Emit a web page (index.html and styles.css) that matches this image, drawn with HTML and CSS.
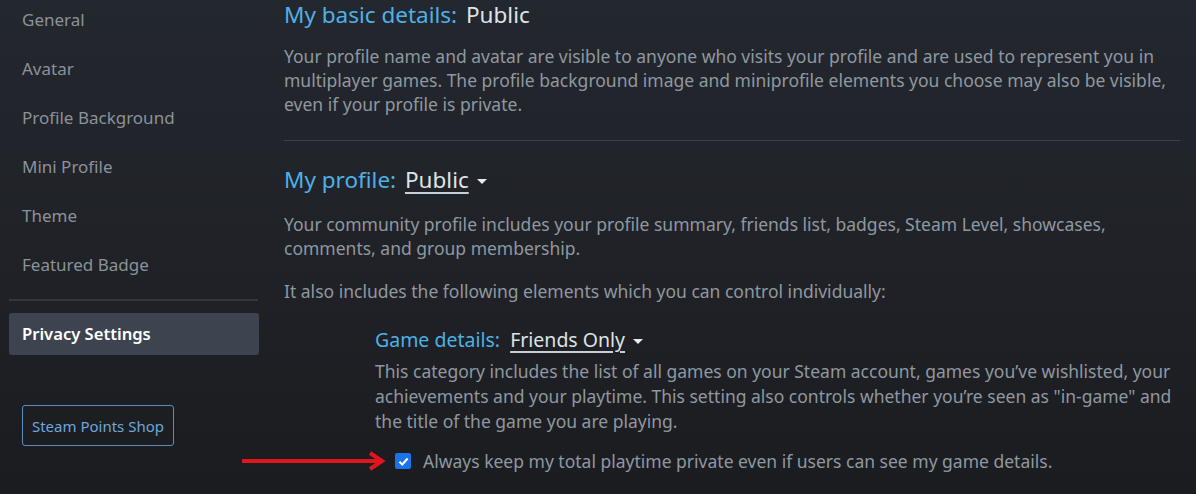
FILE: index.html
```html
<!DOCTYPE html>
<html>
<head>
<meta charset="utf-8">
<link rel="stylesheet" href="styles.css">
</head>
<body>
<div class="page">
  <nav class="sidebar">
    <a class="nav-item">General</a>
    <a class="nav-item">Avatar</a>
    <a class="nav-item">Profile Background</a>
    <a class="nav-item">Mini Profile</a>
    <a class="nav-item">Theme</a>
    <a class="nav-item">Featured Badge</a>
    <div class="nav-divider"></div>
    <a class="nav-item active">Privacy Settings</a>
    <button class="points-btn">Steam Points Shop</button>
  </nav>
  <main class="content">
    <section class="block">
      <h2 class="heading"><span class="label">My basic details:</span> <span class="value">Public</span></h2>
      <p class="desc first">Your profile name and avatar are visible to anyone who visits your profile and are used to represent you in multiplayer games. The profile background image and miniprofile elements you choose may also be visible, even if your profile is private.</p>
    </section>
    <div class="rule"></div>
    <section class="block">
      <h2 class="heading"><span class="label">My profile:</span> <span class="value dropdown">Public</span><span class="caret"></span></h2>
      <p class="desc intro">Your community profile includes your profile summary, friends list, badges, Steam Level, showcases, comments, and group membership.</p>
      <p class="desc second">It also includes the following elements which you can control individually:</p>
      <div class="sub">
        <h3 class="subheading"><span class="label">Game details:</span> <span class="value dropdown">Friends Only</span><span class="caret"></span></h3>
        <p class="desc subdesc">This category includes the list of all games on your Steam account, games you’ve wishlisted, your achievements and your playtime. This setting also controls whether you’re seen as "in-game" and the title of the game you are playing.</p>
      </div>
      <div class="check-row">
        <div class="arrow">
          <svg width="146" height="20" viewBox="0 0 146 20"><path d="M0 10H138" stroke="#e0161d" stroke-width="4"/><path d="M128 2L140 10L128 18" fill="none" stroke="#e0161d" stroke-width="4" stroke-linejoin="miter"/></svg>
        </div>
        <span class="checkbox"><svg width="15" height="15" viewBox="0 0 15 15"><path d="M3.5 7.8L6.3 10.5L11.6 4.6" fill="none" stroke="#fff" stroke-width="2.2"/></svg></span>
        <span class="check-label">Always keep my total playtime private even if users can see my game details.</span>
      </div>
    </section>
  </main>
</div>
</body>
</html>
```
FILE: styles.css
```css
* { box-sizing: border-box; }
html, body { margin: 0; padding: 0; }
body {
  width: 1196px;
  height: 494px;
  overflow: hidden;
  background: linear-gradient(180deg, #23272e 0%, #1f2126 60%, #1b1c20 100%);
  font-family: "Noto Sans", "Open Sans", sans-serif;
  color: #8f98a0;
}
.page { display: flex; height: 494px; }
.sidebar {
  width: 284px;
  flex: none;
  padding: 0 25px 0 9px;
  display: flex;
  flex-direction: column;
}
.nav-item {
  display: block;
  height: 49px;
  line-height: 40px;
  padding-left: 13px;
  font-size: 17px;
  color: #8b929a;
}
.nav-divider { height: 2px; background: #33373f; margin: 5px 0 12px; width: 249px; }
.nav-item.active {
  width: 250px;
  height: 42px;
  line-height: 42px;
  background: #3d4450;
  border-radius: 3px;
  color: #ffffff;
  font-weight: 600;
  font-size: 16.6px;
}
.points-btn {
  margin: 50px 0 0 13px;
  width: 152px;
  height: 41px;
  background: transparent;
  border: 1px solid #5b8ebf;
  border-radius: 3px;
  color: #6ea6dc;
  font-family: inherit;
  font-size: 15px;
  padding: 0;
  text-align: center;
}
.content { flex: 1; padding-right: 16px; }
.heading {
  margin: 0;
  font-weight: 400;
  font-size: 22.5px;
  line-height: 30px;
  height: 30px;
}
.label { color: #4fb0e6; }
.value { color: #dfe3e6; margin-left: 3px; }
.subheading .value { margin-left: 5px; }
.dropdown { text-decoration: underline; text-underline-offset: 4px; text-decoration-thickness: 1.5px; text-decoration-color: #c6d0d8; }
.caret {
  display: inline-block;
  width: 0; height: 0;
  border-left: 5px solid transparent;
  border-right: 5px solid transparent;
  border-top: 5px solid #e8ecef;
  margin-left: 8px;
  vertical-align: middle;
}
.desc {
  margin: 0;
  font-size: 17.5px;
  line-height: 24px;
  color: #8f98a0;
}
.desc.first { margin-top: 14px; }
.rule { height: 1px; background: #3b4149; margin: 24px 0 24px; }
.desc.intro { margin-top: 17px; }
.second { margin-top: 19px; }
.sub { padding-left: 91px; margin-top: 24px; }
.subheading {
  margin: 0;
  font-weight: 400;
  font-size: 19.5px;
  line-height: 26px;
}
.subdesc { line-height: 25px; margin-top: 6px; }
.check-row {
  display: flex;
  align-items: center;
  margin-top: 14px;
  margin-left: -42px;
  height: 26px;
}
.arrow { width: 153px; display: flex; align-items: center; }
.checkbox {
  width: 16px; height: 16px;
  background: #1a73e8;
  border-radius: 2px;
  display: inline-flex;
  align-items: center;
  justify-content: center;
  margin-right: 12px;
}
.check-label { font-size: 17.5px; color: #8f98a0; }
```
